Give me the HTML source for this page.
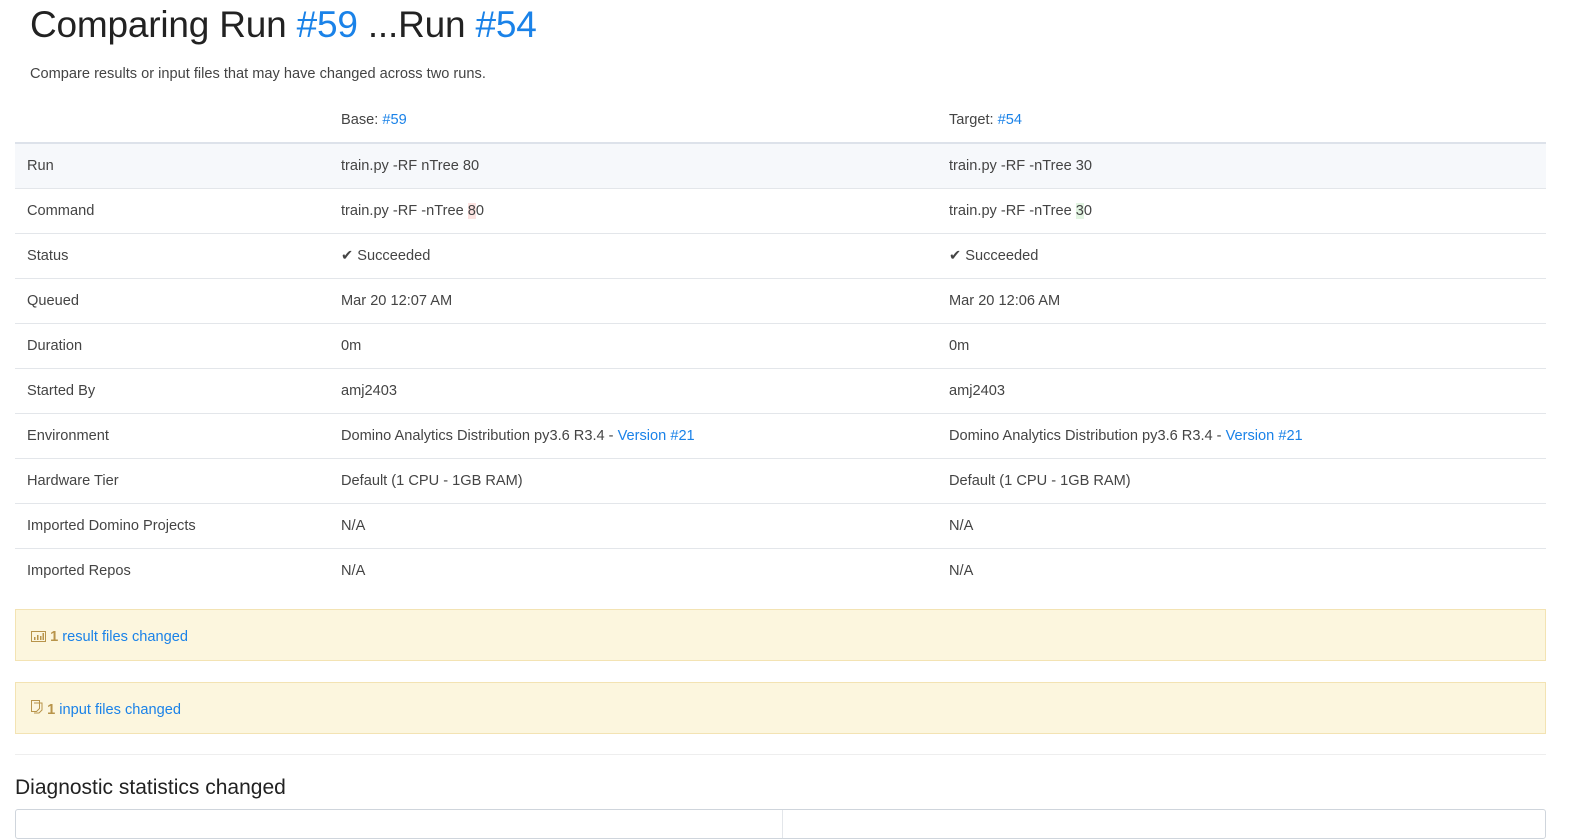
<!DOCTYPE html>
<html><head><meta charset="utf-8"><style>
*{box-sizing:border-box;margin:0;padding:0}
body{width:1579px;height:825px;overflow:hidden;background:#fff;font-family:"Liberation Sans",sans-serif;color:#333;font-size:14.6px}
a{color:#1a82e8;text-decoration:none}
h1{position:absolute;left:30px;top:4px;font-size:37px;font-weight:normal;color:#222;letter-spacing:-0.2px}
.sub{position:absolute;left:30px;top:66px;font-size:14.6px;color:#444}
table{position:absolute;left:15px;top:98px;width:1531px;border-collapse:collapse}
td{height:45px;border-bottom:1px solid #e3e6ea;padding:0;vertical-align:middle;color:#444}
td:nth-child(1){width:326px;padding-left:12px}
td:nth-child(2){width:608px}
tr.h td{height:45px;border-bottom:2px solid #dde2ea}
tr.r1 td{background:#f6f8fb}
tr:last-child td{border-bottom:none}
.del{background:#fde3e1}.add{background:#e2f5e2}
.ban{position:absolute;left:15px;width:1531px;height:52px;background:#fcf6de;border:1px solid #f3e3b3;padding-left:15px;line-height:54px;font-size:14.6px}
.ban b{color:#b8944a;font-weight:bold}
hr{position:absolute;left:15px;top:754px;width:1531px;border:none;border-top:1px solid #eee}
h2{position:absolute;left:15px;top:775px;font-size:21px;font-weight:normal;color:#222}
.box{position:absolute;left:15px;top:809px;width:1531px;height:30px;border:1px solid #cfd5dc;border-radius:3px}
.box:after{content:"";position:absolute;left:766px;top:0;bottom:0;border-left:1px solid #e3e6ea}
</style></head><body>
<h1>Comparing Run <a>#59</a> ...Run <a>#54</a></h1>
<div class="sub">Compare results or input files that may have changed across two runs.</div>
<table>
<tr class="h"><td></td><td>Base: <a>#59</a></td><td>Target: <a>#54</a></td></tr>
<tr class="r1"><td>Run</td><td>train.py -RF nTree 80</td><td>train.py -RF -nTree 30</td></tr>
<tr><td>Command</td><td>train.py -RF -nTree <span class="del">8</span>0</td><td>train.py -RF -nTree <span class="add">3</span>0</td></tr>
<tr><td>Status</td><td>✔ Succeeded</td><td>✔ Succeeded</td></tr>
<tr><td>Queued</td><td>Mar 20 12:07 AM</td><td>Mar 20 12:06 AM</td></tr>
<tr><td>Duration</td><td>0m</td><td>0m</td></tr>
<tr><td>Started By</td><td>amj2403</td><td>amj2403</td></tr>
<tr><td>Environment</td><td>Domino Analytics Distribution py3.6 R3.4 - <a>Version #21</a></td><td>Domino Analytics Distribution py3.6 R3.4 - <a>Version #21</a></td></tr>
<tr><td>Hardware Tier</td><td>Default (1 CPU - 1GB RAM)</td><td>Default (1 CPU - 1GB RAM)</td></tr>
<tr><td>Imported Domino Projects</td><td>N/A</td><td>N/A</td></tr>
<tr><td>Imported Repos</td><td>N/A</td><td>N/A</td></tr>
</table>
<div class="ban" style="top:609px"><svg width="15" height="11" viewBox="0 0 15 11" style="vertical-align:-1px"><rect x="0.5" y="0.5" width="14" height="10" fill="none" stroke="#b8944a"/><rect x="3" y="6" width="1.5" height="3" fill="#b8944a"/><rect x="6" y="4" width="1.5" height="5" fill="#b8944a"/><rect x="9" y="5" width="1.5" height="4" fill="#b8944a"/><rect x="11.5" y="2" width="1.5" height="7" fill="#b8944a"/></svg> <b>1</b> <a>result files changed</a></div>
<div class="ban" style="top:682px"><svg width="12" height="14" viewBox="0 0 12 14" style="vertical-align:0"><path d="M0.5 0.5H8.5V8.5L5.5 11.5H0.5Z M3 3H11V10L8 13H3" fill="none" stroke="#b8944a"/></svg> <b>1</b> <a>input files changed</a></div>
<hr>
<h2 style="top:776px">Diagnostic statistics changed</h2>
<div class="box"></div>
</body></html>
